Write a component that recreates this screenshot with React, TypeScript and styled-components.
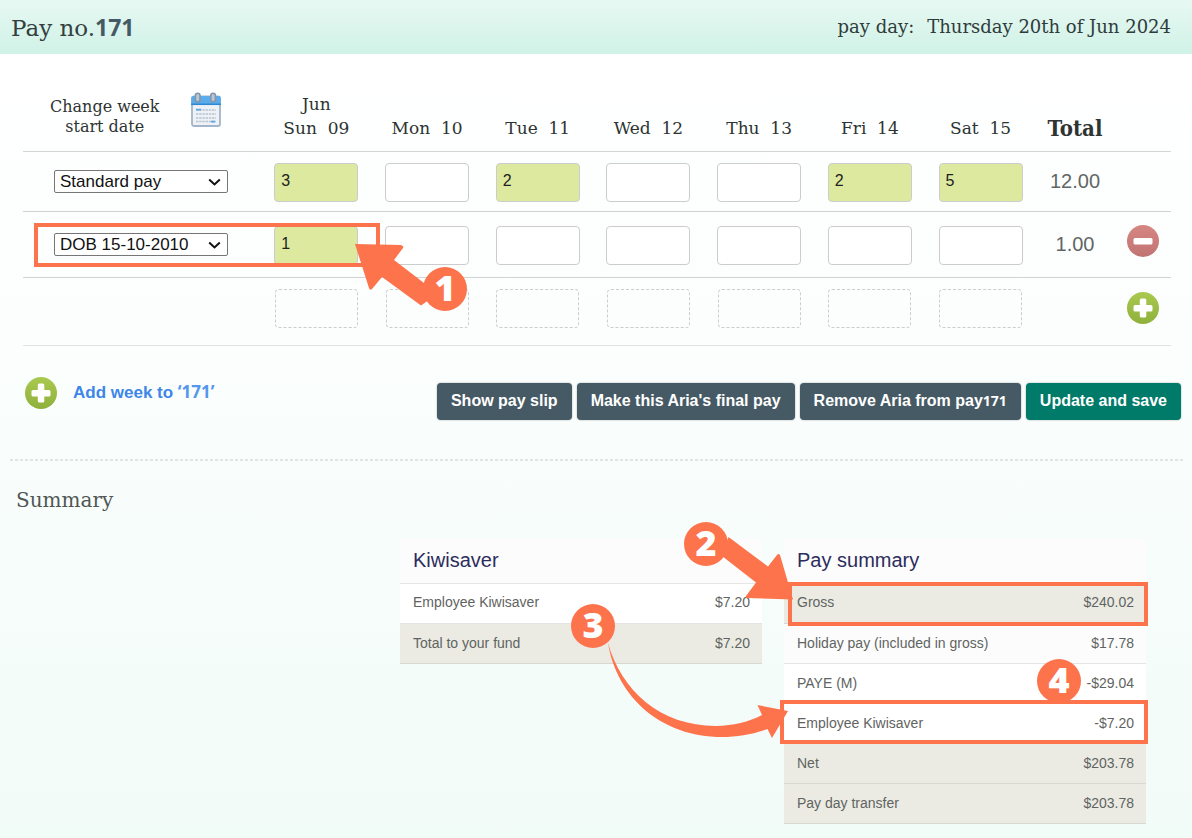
import React from "react";
import styled, { createGlobalStyle } from "styled-components";

const slab = '"DejaVu Serif", serif';
const sans = '"Liberation Sans", Arial, sans-serif';
const humanist = '"Open Sans", "Noto Sans", sans-serif';
const orange = "#fd734c";

const GlobalStyle = createGlobalStyle`
  *, *::before, *::after { box-sizing: border-box; }
  html { min-height: 100%; }
  body {
    margin: 0;
    font-family: ${sans};
    color: #333;
  }
`;

const Page = styled.div`
  min-width: 1120px;
  min-height: 100vh;
  padding-bottom: 14px;
  background: linear-gradient(#ffffff 60px, #fafefd 400px, #f1fbf8 100%);
`;

const TopBar = styled.header`
  display: flex;
  align-items: center;
  justify-content: space-between;
  height: 54px;
  padding: 0 21px 0 11px;
  background: linear-gradient(#e7f8f2, #d0f2e7);
  font-family: ${slab};
`;

const PayTitle = styled.h1`
  margin: 0;
  font-size: 23px;
  font-weight: 400;
  line-height: 28px;
  color: #33403f;
`;

const PayNumber = styled.strong`
  font-family: ${humanist};
  font-size: 23px;
  font-weight: 700;
  color: #455964;
`;

const PayDay = styled.p`
  display: flex;
  gap: 13px;
  margin: 0;
  font-size: 18px;
  line-height: 24px;
  color: #2f3c3c;
`;

const Timesheet = styled.section`
  position: relative;
  padding: 37px 21px 0 23px;
`;

const HoursTable = styled.table`
  width: 100%;
  border-collapse: collapse;
  table-layout: fixed;
`;

const LabelCol = styled.col`
  width: 238px;
`;
const TotalCol = styled.col`
  width: 78px;
`;
const ActionCol = styled.col`
  width: 57px;
`;

const HeadRow = styled.tr`
  height: 60px;
  border-bottom: 1px solid #d3d6d5;
`;

const HoursRow = styled.tr<{ $height: number; $faint?: boolean }>`
  height: ${(p) => p.$height}px;
  border-bottom: 1px solid ${(p) => (p.$faint ? "#e0e3e2" : "#d0d3d2")};
`;

const HeadCell = styled.th<{ $total?: boolean }>`
  padding: 0 0 11px;
  vertical-align: bottom;
  font-family: ${(p) => (p.$total ? '"DejaVu Serif Condensed", ' : "") + slab};
  font-size: ${(p) => (p.$total ? 22 : 17)}px;
  font-weight: ${(p) => (p.$total ? 700 : 400)};
  line-height: 24px;
  text-align: center;
  color: #2d3433;
`;

const WeekStart = styled.div`
  display: flex;
  align-items: flex-start;
  gap: 30px;
  padding: 0 0 3px 27px;
  font-size: 16px;
  line-height: 20px;
`;

const WeekText = styled.span`
  padding-top: 5px;
  white-space: nowrap;
`;

const IconButton = styled.button`
  display: inline-flex;
  padding: 0;
  border: 0;
  background: none;
  cursor: pointer;
`;

const Cell = styled.td<{ $lift?: boolean }>`
  padding: 0 0 ${(p) => (p.$lift ? 6 : 0)}px;
  vertical-align: middle;
  text-align: center;
  line-height: 0;
`;

const HoursCell = styled(Cell)`
  padding-top: 2px;
`;

const TypeCell = styled(Cell)`
  padding-left: 31px;
  text-align: left;
`;

const TotalCell = styled(Cell)`
  font-size: 20px;
  line-height: 24px;
  color: #616665;
`;

const SelectBox = styled.span`
  position: relative;
  display: inline-block;
`;

const SelectChevron = styled.svg`
  position: absolute;
  right: 7px;
  top: 8px;
  pointer-events: none;
`;

const PaySelect = styled.select`
  appearance: none;
  width: 174px;
  height: 23px;
  padding: 0 24px 0 5px;
  border: 1px solid #767676;
  border-radius: 2px;
  background-color: #fff;
  color: #111;
  font-family: ${sans};
  font-size: 17px;
`;

const HoursInput = styled.input`
  width: 84px;
  height: 39px;
  padding: 0 6px 2px;
  border: 1px solid #ccc;
  border-radius: 4px;
  background: #fff;
  color: #222;
  font-family: ${sans};
  font-size: 16px;

  &:not(:placeholder-shown) {
    background: #dce99f;
  }
`;

const EmptySlot = styled.span`
  display: inline-block;
  width: 83px;
  height: 39px;
  border: 1px dashed #ccc;
  border-radius: 4px;
`;

const ActionBar = styled.div`
  display: flex;
  justify-content: space-between;
  align-items: flex-start;
  padding: 30px 11px 0 24px;
`;

const AddWeek = styled.a`
  display: flex;
  align-items: center;
  gap: 15px;
  color: #3e86e8;
  font-size: 17px;
  font-weight: 700;
  line-height: 24px;
  text-decoration: none;
`;

const AddWeekNumber = styled.span`
  font-family: ${humanist};
  font-size: 17px;
  font-weight: 700;
  line-height: 20px;
  color: #5597ec;
`;

const Buttons = styled.div`
  display: flex;
  gap: 5px;
  padding-top: 7px;
`;

const ActionButton = styled.button<{ $primary?: boolean }>`
  height: 37px;
  padding: 0 14px;
  border: 0;
  border-radius: 4px;
  background: ${(p) => (p.$primary ? "#007a69" : "#465a65")};
  box-shadow: 0 0 2px rgba(0, 0, 0, 0.35);
  color: #fff;
  font-family: ${sans};
  font-size: 16px;
  font-weight: 700;
  line-height: 20px;
  white-space: nowrap;
`;

const ButtonNumber = styled.span`
  font-family: ${humanist};
  font-size: 14px;
  font-weight: 700;
  line-height: 14px;
`;

const SummarySection = styled.section`
  margin: 39px 8px 0 10px;
  padding: 27px 38px 0 6px;
  background: repeating-linear-gradient(90deg, #e0e5e4 0 3px, transparent 3px 5px)
    top / 100% 2px no-repeat;
`;

const SummaryTitle = styled.h2`
  margin: 0;
  font-family: ${slab};
  font-size: 20px;
  font-weight: 400;
  line-height: 28px;
  color: #505654;
`;

const Panels = styled.div`
  position: relative;
  display: flex;
  align-items: flex-start;
  gap: 22px;
  width: max-content;
  margin: 25px 0 0 auto;
`;

const Panel = styled.section`
  width: 362px;
  background: #fcfcfc;
`;

const PanelTitle = styled.h3`
  margin: 0;
  padding: 9px 13px 11px;
  border-bottom: 1px solid #e6e6e6;
  font-size: 20px;
  font-weight: 400;
  line-height: 24px;
  color: #2c2d5c;
`;

const AmountTable = styled.table`
  width: 100%;
  border-collapse: collapse;
`;

const AmountRow = styled.tr<{ $tone: "shaded" | "white" | "soft" }>`
  height: 40px;
  border-bottom: 1px solid
    ${(p) => (p.$tone === "shaded" ? "#d8d8d2" : "#e4e4e4")};
  background: ${(p) =>
    p.$tone === "shaded" ? "#ebebe3" : p.$tone === "white" ? "#fff" : "#fcfcfc"};
  font-size: 14px;
  color: #5f6462;
`;

const AmountLabel = styled.th`
  padding: 0 0 2px 13px;
  font-weight: 400;
  text-align: left;
`;

const AmountValue = styled.td`
  padding: 0 12px 2px 0;
  text-align: right;
`;

const Overlay = styled.svg`
  position: absolute;
  left: 0;
  top: 0;
  pointer-events: none;
`;

const SummaryOverlay = styled(Overlay)`
  top: -39px;
`;

const MarkerText = styled.text`
  font-family: ${humanist};
  font-size: 36px;
  font-weight: 800;
  text-anchor: middle;
  fill: #fff;
`;

function RoundIcon({ kind }: { kind: "plus" | "minus" }) {
  const id = React.useId();
  const [light, dark] =
    kind === "plus" ? ["#a9c94f", "#8fb03c"] : ["#d68682", "#c07472"];
  return (
    <svg width="34" height="34" viewBox="0 0 34 34" aria-hidden="true">
      <defs>
        <linearGradient id={id} x1="0" y1="0" x2="0" y2="1">
          <stop offset="0" stopColor={light} />
          <stop offset="1" stopColor={dark} />
        </linearGradient>
      </defs>
      <circle cx="17" cy="17" r="16" fill={`url(#${id})`} />
      <rect x="7.5" y="14" width="19" height="6.5" rx="1.5" fill="#fff" />
      {kind === "plus" && (
        <rect x="13.8" y="7.5" width="6.5" height="19" rx="1.5" fill="#fff" />
      )}
    </svg>
  );
}

function CalendarIcon() {
  return (
    <svg width="32" height="36" viewBox="0 0 32 36" aria-hidden="true">
      <rect x="2" y="4.5" width="28" height="29.5" rx="2" fill="#eef2f6" stroke="#a3b5c8" strokeWidth="1.8" />
      <path d="M1.2 13V6a2 2 0 0 1 2-2h25.6a2 2 0 0 1 2 2v7z" fill="#5cabea" />
      <path d="M1.2 12.3h29.6" stroke="#2f86d3" strokeWidth="1.5" />
      <path
        d="M6 18h20M6 22h20M6 26h20M6 29.5h20"
        stroke="#b9c3ce"
        strokeWidth="1.6"
        strokeDasharray="2.4 0.8"
      />
      <path d="M6 17.6h5M21 29.6h4" stroke="#57a8e8" strokeWidth="1.6" />
      <rect x="5.4" y="1.2" width="4.6" height="8.6" rx="2.3" fill="#b9c8d6" stroke="#8496a8" strokeWidth="1.6" />
      <rect x="20.8" y="1.2" width="4.6" height="8.6" rx="2.3" fill="#b9c8d6" stroke="#8496a8" strokeWidth="1.6" />
    </svg>
  );
}

function Marker({ x, y, n }: { x: number; y: number; n: number }) {
  return (
    <g>
      <circle cx={x} cy={y} r="22" fill={orange} />
      <MarkerText x={x} y={y + 12}>
        {n}
      </MarkerText>
    </g>
  );
}

const days = ["Sun\u00a0 09", "Mon\u00a0 10", "Tue\u00a0 11", "Wed\u00a0 12", "Thu\u00a0 13", "Fri\u00a0 14", "Sat\u00a0 15"];

const payLines = [
  { type: "Standard pay", hours: ["3", "", "2", "", "", "2", "5"], total: "12.00", height: 60 },
  { type: "DOB 15-10-2010", hours: ["1", "", "", "", "", "", ""], total: "1.00", height: 66, removable: true },
];

type Amount = { label: string; value: string; tone: "shaded" | "white" | "soft" };

const kiwisaver: Amount[] = [
  { label: "Employee Kiwisaver", value: "$7.20", tone: "white" },
  { label: "Total to your fund", value: "$7.20", tone: "shaded" },
];

const paySummary: Amount[] = [
  { label: "Gross", value: "$240.02", tone: "shaded" },
  { label: "Holiday pay (included in gross)", value: "$17.78", tone: "soft" },
  { label: "PAYE (M)", value: "-$29.04", tone: "white" },
  { label: "Employee Kiwisaver", value: "-$7.20", tone: "white" },
  { label: "Net", value: "$203.78", tone: "shaded" },
  { label: "Pay day transfer", value: "$203.78", tone: "shaded" },
];

function AmountPanel({ title, rows }: { title: string; rows: Amount[] }) {
  return (
    <Panel>
      <PanelTitle>{title}</PanelTitle>
      <AmountTable>
        <tbody>
          {rows.map((r) => (
            <AmountRow key={r.label} $tone={r.tone}>
              <AmountLabel scope="row">{r.label}</AmountLabel>
              <AmountValue>{r.value}</AmountValue>
            </AmountRow>
          ))}
        </tbody>
      </AmountTable>
    </Panel>
  );
}

export default function App() {
  return (
    <>
      <GlobalStyle />
      <Page>
        <TopBar>
          <PayTitle>
            Pay no.<PayNumber>171</PayNumber>
          </PayTitle>
          <PayDay>
            <span>pay day:</span>
            <span>Thursday 20th of Jun 2024</span>
          </PayDay>
        </TopBar>

        <Timesheet>
          <HoursTable>
            <colgroup>
              <LabelCol />
              {days.map((d) => (
                <col key={d} />
              ))}
              <TotalCol />
              <ActionCol />
            </colgroup>
            <thead>
              <HeadRow>
                <HeadCell>
                  <WeekStart>
                    <WeekText>
                      Change week
                      <br />
                      start date
                    </WeekText>
                    <IconButton type="button" aria-label="Choose week start date">
                      <CalendarIcon />
                    </IconButton>
                  </WeekStart>
                </HeadCell>
                {days.map((d, i) => (
                  <HeadCell key={d} scope="col">
                    {i === 0 && (
                      <>
                        Jun
                        <br />
                      </>
                    )}
                    {d}
                  </HeadCell>
                ))}
                <HeadCell scope="col" $total>
                  Total
                </HeadCell>
                <td />
              </HeadRow>
            </thead>
            <tbody>
              {payLines.map((line) => (
                <HoursRow key={line.type} $height={line.height}>
                  <TypeCell>
                    <SelectBox>
                      <PaySelect aria-label="Pay type" defaultValue={line.type}>
                        <option>{line.type}</option>
                      </PaySelect>
                      <SelectChevron width="13" height="9" viewBox="0 0 13 9" aria-hidden="true">
                        <path d="M1.2 1.5 6.5 6.5 11.8 1.5" fill="none" stroke="#111" strokeWidth="2" />
                      </SelectChevron>
                    </SelectBox>
                  </TypeCell>
                  {line.hours.map((h, i) => (
                    <HoursCell key={i}>
                      <HoursInput
                        type="text"
                        placeholder=" "
                        defaultValue={h}
                        aria-label={`${line.type}, ${days[i]}`}
                      />
                    </HoursCell>
                  ))}
                  <TotalCell>{line.total}</TotalCell>
                  <Cell $lift>
                    {line.removable && (
                      <IconButton type="button" aria-label="Remove line">
                        <RoundIcon kind="minus" />
                      </IconButton>
                    )}
                  </Cell>
                </HoursRow>
              ))}
              <HoursRow $height={68} $faint>
                <Cell />
                {days.map((d) => (
                  <Cell key={d} $lift>
                    <EmptySlot />
                  </Cell>
                ))}
                <Cell />
                <Cell $lift>
                  <IconButton type="button" aria-label="Add line">
                    <RoundIcon kind="plus" />
                  </IconButton>
                </Cell>
              </HoursRow>
            </tbody>
          </HoursTable>

          <Overlay width="480" height="270" viewBox="0 54 480 270" aria-hidden="true">
            <rect x="36" y="225" width="342" height="40" fill="none" stroke={orange} strokeWidth="4" />
            <path
              d="M355 244 L401 245 Q404 246 403 248 L394 260 L424 283 L440 292 L421 305.5 L382 277 L372 289 Q370 291 369 288 Z"
              fill={orange}
            />
            <Marker x={445} y={289} n={1} />
          </Overlay>
        </Timesheet>

        <ActionBar>
          <AddWeek href="#add-week">
            <RoundIcon kind="plus" />
            <span>
              Add week to <AddWeekNumber>‘171’</AddWeekNumber>
            </span>
          </AddWeek>
          <Buttons>
            <ActionButton type="button">Show pay slip</ActionButton>
            <ActionButton type="button">Make this Aria's final pay</ActionButton>
            <ActionButton type="button">
              Remove Aria from pay<ButtonNumber>171</ButtonNumber>
            </ActionButton>
            <ActionButton type="button" $primary>
              Update and save
            </ActionButton>
          </Buttons>
        </ActionBar>

        <SummarySection>
          <SummaryTitle>Summary</SummaryTitle>
          <Panels>
            <AmountPanel title="Kiwisaver" rows={kiwisaver} />
            <AmountPanel title="Pay summary" rows={paySummary} />
            <SummaryOverlay width="760" height="320" viewBox="400 500 760 320" aria-hidden="true">
              <rect x="790" y="584" width="356" height="40" fill="none" stroke={orange} strokeWidth="4" />
              <rect x="782" y="702" width="364" height="40" fill="none" stroke={orange} strokeWidth="4" />
              <path
                d="M728.5 537 L768 566.5 L777 555 Q779 553 780 555 L793 599.5 L747 598 Q745 597.5 746 596 L756 582.5 L722 556 Z"
                fill={orange}
              />
              <path
                d="M608 643 C621 690 660 726 716 726 C733 725.5 749 722 762 715 L757.5 705 L788 711 L772 738 L767.5 729 C753 734 738 737 722 737 C662 737 617 698 608 643 Z"
                fill={orange}
              />
              <Marker x={706} y={544} n={2} />
              <Marker x={593} y={626} n={3} />
              <Marker x={1059} y={681} n={4} />
            </SummaryOverlay>
          </Panels>
        </SummarySection>
      </Page>
    </>
  );
}
